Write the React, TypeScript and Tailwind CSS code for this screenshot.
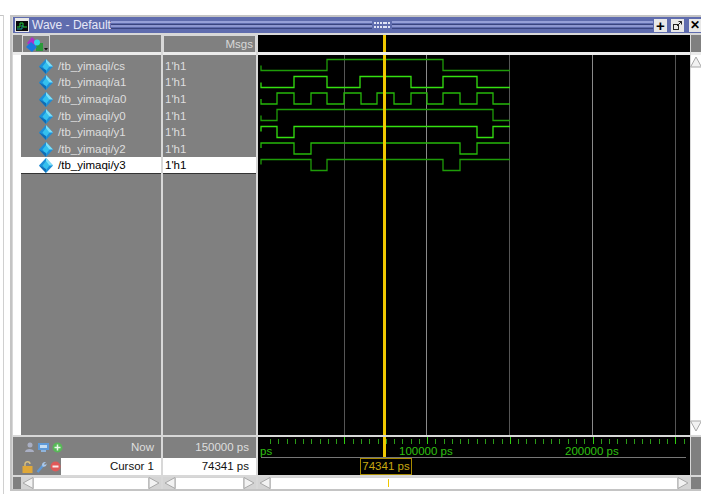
import React from 'react'

const font = { fontFamily: '"Liberation Sans", Arial, sans-serif' }

const signals = ['cs', 'a1', 'a0', 'y0', 'y1', 'y2', 'y3']

// wave form points: [high y, low y, starts high, toggle x positions, colour]
const waves: { hi: number; lo: number; start: boolean; at: number[]; color: string }[] = [
  { hi: 59.5, lo: 70.5, start: false, at: [327, 443], color: '#1e9c08' },
  { hi: 76.5, lo: 87.5, start: false, at: [294, 327, 360, 411, 443, 477], color: '#34e010' },
  { hi: 93, lo: 104, start: false, at: [277, 294, 311, 327, 344, 361, 377, 394, 411, 427, 443, 460, 477, 493], color: '#26b80a' },
  { hi: 109.5, lo: 120.5, start: false, at: [277, 493], color: '#1e9c08' },
  { hi: 126.5, lo: 137.5, start: true, at: [277, 294, 477, 493], color: '#34e010' },
  { hi: 143, lo: 154, start: true, at: [294, 311, 460, 477], color: '#26b80a' },
  { hi: 159.5, lo: 170.5, start: true, at: [311, 327, 443, 460], color: '#1e9c08' },
]

function wavePath(w: (typeof waves)[number]) {
  let high = w.start
  let d = `M261 ${high ? w.hi + 5 : w.lo - 5} V${high ? w.hi : w.lo}`
  for (const x of w.at) {
    d += ` H${x}`
    high = !high
    d += ` V${high ? w.hi : w.lo}`
  }
  return d + ' H510'
}

function Diamond() {
  return (
    <svg width="14" height="15" viewBox="0 0 14 15" className="shrink-0 -translate-x-px">
      <path d="M7 0 L14 7.5 L7 15 L0 7.5 Z" fill="#1c8fd8" />
      <path d="M7 0 L14 7.5 L7 7.5 Z" fill="#7fe0f8" />
      <path d="M7 3 L10.5 7.5 L7 12 L3.5 7.5 Z" fill="#35c0ee" />
      <path d="M0 7.5 L7 15 L7 11 Z" fill="#0f6cb4" />
    </svg>
  )
}

function Arrow({ dir }: { dir: 'left' | 'right' | 'up' | 'down' }) {
  const pts = {
    left: '1,6 11,0.5 11,11.5',
    right: '11,6 1,0.5 1,11.5',
    up: '6,1 0.5,11 11.5,11',
    down: '6,11 0.5,1 11.5,1',
  }[dir]
  return (
    <svg width="12" height="12" viewBox="0 0 12 12" className="shrink-0">
      <polygon points={pts} fill="#f2f2f2" stroke="#a8a8a8" strokeWidth="1" />
    </svg>
  )
}

function HScroll({ marker }: { marker?: boolean }) {
  return (
    <div className="flex h-[12px] items-center bg-[#d4d4d4] pl-[1px] pr-[1px]">
      <Arrow dir="left" />
      <div className="relative h-[11px] flex-1 bg-white">
        {marker && <div className="absolute left-[117px] top-[1px] h-[8px] w-px bg-[#f0c800]" />}
      </div>
      <Arrow dir="right" />
    </div>
  )
}

function Stripes() {
  return (
    <div className="flex h-[8px] min-w-0 flex-1 flex-col justify-between">
      <div className="h-[2px] bg-[#96a0d8]" />
      <div className="h-px bg-[#39447f]" />
      <div className="h-[2px] bg-[#8d97d0]" />
      <div className="h-px bg-[#39447f]" />
    </div>
  )
}

function TitleBar() {
  return (
    <div className="flex h-[16px] items-center bg-[#5f6cae] pl-[2px] text-[12px] text-[#e6e8f6]">
      <svg width="14" height="14" viewBox="0 0 14 14" className="shrink-0">
        <rect width="14" height="14" fill="#e8e8e8" />
        <rect x="1" y="3" width="12" height="10" fill="#0a0a0a" />
        <path d="M2 9 H5 V5 H8 V9 H12" stroke="#22d040" strokeWidth="1" fill="none" />
        <path d="M2 11 H7 V7" stroke="#20a0a0" strokeWidth="1" fill="none" />
      </svg>
      <span className="ml-[3px] w-[79px] shrink-0 whitespace-nowrap">Wave - Default</span>
      <Stripes />
      <div className="mx-[1px] grid w-[18px] shrink-0 grid-cols-6 gap-x-[1px] gap-y-[2px] px-[1px]">
        {Array.from({ length: 12 }).map((_, i) => (
          <div key={i} className="h-[2px] w-[2px] bg-[#dfe2f5]" />
        ))}
      </div>
      <Stripes />
      <div className="ml-[1px] flex h-[13px] w-[13px] shrink-0 items-center justify-center bg-[#e8e8e8] text-[15px] font-bold leading-none text-black">+</div>
      <div className="ml-[4px] flex h-[13px] w-[13px] shrink-0 items-center justify-center bg-[#e8e8e8]">
        <svg width="11" height="11" viewBox="0 0 11 11">
          <rect x="1.5" y="4.5" width="5" height="5" fill="none" stroke="#222" />
          <path d="M5 6 L9.5 1.5 M6.5 1.5 H9.5 V4.5" stroke="#222" fill="none" />
        </svg>
      </div>
      <div className="ml-[5px] flex h-[13px] w-[12px] shrink-0 items-center justify-center bg-[#e8e8e8] text-[12px] font-bold leading-none text-black">✕</div>
    </div>
  )
}

function NamesColumn() {
  return (
    <div className="flex w-[148px] shrink-0 flex-col">
      <div className="flex h-[17px] items-end bg-[#808080] pl-[9px]">
        <div className="relative h-[17px] w-[28px] border-x border-t border-[#d8d8d8]">
          <svg width="24" height="16" viewBox="0 0 24 16" className="absolute left-[1px] top-0">
            <path d="M8 1 L14 7 L8 11 L3 7 Z" fill="#b030c8" />
            <rect x="12" y="7" width="7" height="8" fill="#2a9a3a" />
            <circle cx="13" cy="6.5" r="3" fill="#30d8e8" />
            <path d="M7 6 L13 11 L8 16 L2 11 Z" fill="#1878e0" />
            <path d="M20 12 H24 L22 14.5 Z" fill="#111" />
          </svg>
        </div>
      </div>
      <div className="h-[3px] bg-[#ececec]" />
      <div className="flex h-[380px] bg-white pl-[8px]">
        <div className="flex-1 bg-[#808080] pt-[2px]">
          {signals.map((s, i) => {
            const selected = i === signals.length - 1
            return (
              <div
                key={s}
                className={`flex h-[16.67px] items-center pl-[19px] pt-[2px] text-[11.5px] ${
                  selected ? 'border-b border-[#333] bg-white text-black' : 'text-[#dedede]'
                }`}
              >
                <Diamond />
                <span className="ml-[4px] whitespace-nowrap">/tb_yimaqi/{s}</span>
              </div>
            )
          })}
        </div>
      </div>
      <div className="h-[2px] bg-[#d8d8d8]" />
      <div className="flex h-[21px] items-center justify-between bg-[#808080] pl-[11px] pr-[7px] text-[11.5px] text-[#dedede]">
        <div className="flex items-center gap-[3px]">
          <svg width="11" height="11" viewBox="0 0 11 11">
            <circle cx="6" cy="3" r="2.5" fill="#a9afc4" />
            <path d="M1 10 C1 6 10 6 10 10 Z" fill="#a9afc4" />
          </svg>
          <svg width="11" height="11" viewBox="0 0 11 11">
            <rect x="0" y="1" width="11" height="7" fill="#5f9ad8" />
            <rect x="2" y="3" width="7" height="3" fill="#c6ddf2" />
            <rect x="3" y="8" width="5" height="2" fill="#8fb4dc" />
          </svg>
          <svg width="11" height="11" viewBox="0 0 11 11">
            <circle cx="5.5" cy="5.5" r="5" fill="#58b858" />
            <path d="M5.5 2.5 V8.5 M2.5 5.5 H8.5" stroke="#e8f8e8" strokeWidth="1.5" />
          </svg>
        </div>
        <span>Now</span>
      </div>
      <div className="flex h-[17px] bg-[#808080] pl-[9px] text-[11.5px]">
        <div className="flex items-center gap-[3px]">
          <svg width="11" height="12" viewBox="0 0 11 12">
            <rect x="0.5" y="5" width="10" height="7" fill="#e0a838" />
            <path d="M3 5 V3 C3 0 8 0 8 3" stroke="#d8c080" strokeWidth="1.4" fill="none" />
          </svg>
          <svg width="11" height="12" viewBox="0 0 11 12">
            <path d="M1.5 11 L7 4.5" stroke="#5f9ad8" strokeWidth="2.4" />
            <path d="M6 4 C6 1.5 8 0.5 10 1 L8 3 L9 4 L10.5 2.5 C11 5 8.5 6.5 6.5 5.5 Z" fill="#a8c8ec" />
          </svg>
          <svg width="11" height="11" viewBox="0 0 11 11">
            <circle cx="5.5" cy="5.5" r="5" fill="#e05858" />
            <path d="M2.5 5.5 H8.5" stroke="#fbe8e8" strokeWidth="2" />
          </svg>
        </div>
        <div className="flex flex-1 items-center justify-end bg-white pr-[7px] text-[#111]">Cursor 1</div>
      </div>
      <div className="h-[2px] bg-[#d8d8d8]" />
      <div className="flex">
        <div className="w-[8px] bg-[#808080]" />
        <div className="flex-1">
          <HScroll />
        </div>
      </div>
    </div>
  )
}

function MsgsColumn() {
  return (
    <div className="flex w-[93px] shrink-0 flex-col">
      <div className="flex h-[17px] items-center justify-end border-x border-t border-[#d8d8d8] bg-[#808080] pr-[2px] pt-[2px] text-[11.5px] text-[#d8d8d8]">Msgs</div>
      <div className="h-[3px] bg-[#ececec]" />
      <div className="h-[380px] bg-[#808080] pt-[2px]">
        {signals.map((s, i) => (
          <div
            key={s}
            className={`flex h-[16.67px] items-center pl-[2px] pt-[2px] text-[11.5px] ${
              i === signals.length - 1 ? 'border-b border-[#333] bg-white text-black' : 'text-[#dedede]'
            }`}
          >
            1'h1
          </div>
        ))}
      </div>
      <div className="h-[2px] bg-[#d8d8d8]" />
      <div className="flex h-[21px] items-center justify-end bg-[#808080] pr-[7px] text-[11.5px] text-[#dedede]">150000 ps</div>
      <div className="flex h-[17px] items-center justify-end bg-white pr-[7px] text-[11.5px] text-[#111]">74341 ps</div>
      <div className="h-[2px] bg-[#d8d8d8]" />
      <HScroll />
    </div>
  )
}

function WaveColumn() {
  const ticks = Array.from({ length: 51 }).map((_, i) => 270 + i * 8.27)
  return (
    <div className="flex w-[432px] shrink-0 flex-col">
      <div className="relative h-[17px] bg-black">
        <div className="absolute left-[125px] top-0 h-full w-[3px] bg-[#f0c800]" />
      </div>
      <div className="h-[3px] bg-[#ececec]" />
      <div className="h-[380px] bg-black">
        <svg width="432" height="380" viewBox="258 55 432 380" className="block">
          <path d="M344.5 55 V435 M509.5 55 V435 M675.5 55 V435" stroke="#555" />
          <path d="M426.5 55 V435 M592.5 55 V435" stroke="#8a8a8a" />
          {waves.map((w, i) => (
            <path key={i} d={wavePath(w)} stroke={w.color} strokeWidth="1.3" fill="none" />
          ))}
          <rect x="383" y="55" width="3" height="380" fill="#f0c800" />
        </svg>
      </div>
      <div className="h-[2px] bg-[#d8d8d8]" />
      <div className="relative h-[21px] bg-black text-[11.5px] leading-none text-[#2fc010]">
        <svg width="432" height="21" viewBox="258 437 432 21" className="absolute left-0 top-0">
          {ticks.map((x, i) => {
            const major = (i + 1) % 10 === 0
            return (
              <path
                key={i}
                d={`M${Math.round(x) + 0.5} ${major ? 437 : 439} V444`}
                stroke={major ? '#2fd010' : '#2a9a18'}
              />
            )
          })}
          <rect x="383" y="437" width="3" height="21" fill="#f0c800" />
          <path d="M261 457.5 H686" stroke="#777" />
        </svg>
        <span className="absolute left-[2px] top-[9px]">ps</span>
        <span className="absolute left-[141px] top-[9px]">100000 ps</span>
        <span className="absolute left-[307px] top-[9px]">200000 ps</span>
      </div>
      <div className="relative h-[17px] bg-black">
        <div className="absolute left-[102px] top-0 flex h-[17px] w-[52px] items-center justify-center border border-[#a88a00] text-[11.5px] text-[#c8a810]">74341 ps</div>
      </div>
      <div className="h-[2px] bg-[#d8d8d8]" />
      <HScroll marker />
    </div>
  )
}

function RightScroll() {
  return (
    <div className="-ml-px flex min-w-0 flex-1 flex-col">
      <div className="h-[17px] bg-[#808080]" />
      <div className="h-[3px] bg-[#ececec]" />
      <div className="flex h-[380px] flex-col items-center justify-between bg-white pb-[3px] pt-px">
        <Arrow dir="up" />
        <Arrow dir="down" />
      </div>
      <div className="h-[2px] bg-[#d8d8d8]" />
      <div className="h-[38px] bg-[#808080]" />
      <div className="h-[2px] bg-[#d8d8d8]" />
      <div className="h-[12px] bg-[#808080]" />
    </div>
  )
}

export default function App() {
  return (
    <div className="flex h-[494px] w-[701px] overflow-hidden bg-white pt-[15px]" style={font}>
      <div className="h-[1px] w-[3px] shrink-0 bg-[#c4c4c4]" />
      <div className="h-full w-px shrink-0 bg-[#d0d0d0]" />
      <div className="w-[6px] shrink-0" />
      <div className="h-[476px] min-w-0 flex-1 border-b-2 border-l-2 border-t-2 border-[#c4c4c4] bg-[#d8d8d8]">
        <div className="pl-px">
          <TitleBar />
        </div>
        <div className="flex gap-[2px] pl-px pt-[2px]">
          <NamesColumn />
          <MsgsColumn />
          <WaveColumn />
          <RightScroll />
        </div>
      </div>
    </div>
  )
}
